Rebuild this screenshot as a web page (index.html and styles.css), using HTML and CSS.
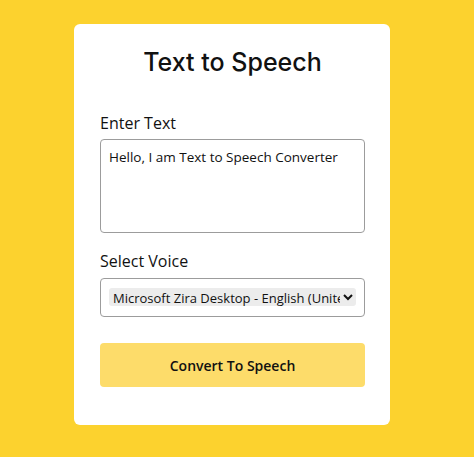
FILE: index.html
```html
<!DOCTYPE html>
<html lang="en">
<head>
<meta charset="utf-8">
<title>Text to Speech</title>
<link rel="stylesheet" href="styles.css">
</head>
<body>
<main class="card">
  <h1 class="title">Text to Speech</h1>
  <label class="label label-first" for="txt">Enter Text</label>
  <textarea id="txt" class="textarea">Hello, I am Text to Speech Converter</textarea>
  <label class="label label-second" for="voice">Select Voice</label>
  <div class="select">
    <select id="voice" class="select-pill">
      <option>Microsoft Zira Desktop - English (United States)</option>
    </select>
  </div>
  <button class="btn" type="button">Convert To Speech</button>
</main>
</body>
</html>
```

FILE: styles.css
```css
* { box-sizing: border-box; }
html, body { margin: 0; padding: 0; }
body {
  background: #fcd22e;
  width: 474px;
  height: 457px;
  overflow: hidden;
  font-family: "Open Sans", "Noto Sans", sans-serif;
  color: #111;
  padding: 24px 0 0 74px;
}
.card {
  width: 316px;
  height: 401px;
  background: #fff;
  border-radius: 6px;
  padding: 22px 25px 38px 26px;
  display: flex;
  flex-direction: column;
}
.title {
  margin: 0;
  font-family: "Inter", "Open Sans", sans-serif;
  font-size: 25px;
  line-height: 33px;
  font-weight: 500;
  text-align: center;
  color: #111;
}
.label {
  display: block;
  font-size: 16px;
  line-height: 20px;
  font-weight: 400;
  color: #111;
}
.label-first { margin-top: 34px; }
.label-second { margin-top: 18px; }
.textarea {
  margin-top: 6px;
  width: 265px;
  height: 94px;
  border: 1px solid #9c9c9c;
  border-radius: 4px;
  padding: 7px 8px;
  font-family: inherit;
  font-size: 13.5px;
  line-height: 20px;
  color: #111;
  resize: none;
  outline: none;
}
.select {
  margin-top: 7px;
  width: 265px;
  height: 39px;
  border: 1px solid #9c9c9c;
  border-radius: 4px;
  padding: 9px 8px;
  display: flex;
}
.select-pill {
  flex: 1;
  min-width: 0;
  height: 18px;
  margin: 0;
  border: none;
  background-color: #ececec;
  border-radius: 3px;
  padding: 0;
  font-family: inherit;
  font-size: 13px;
  line-height: 18px;
  color: #111;
  outline: none;
}
.btn {
  margin-top: 26px;
  width: 265px;
  height: 44px;
  border: none;
  border-radius: 4px;
  background: #fddc6a;
  font-family: inherit;
  font-size: 14px;
  font-weight: 600;
  color: #111;
  cursor: pointer;
}
```
